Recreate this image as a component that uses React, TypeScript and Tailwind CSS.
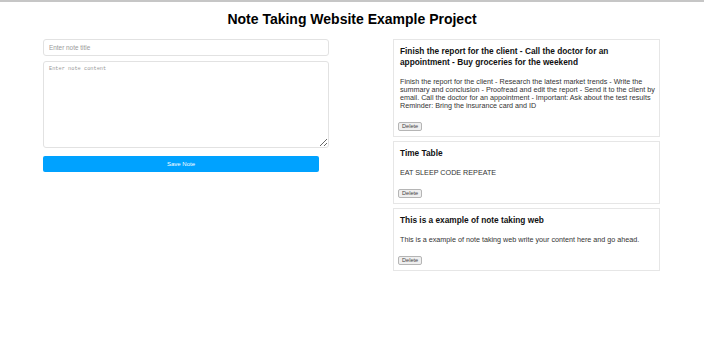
import React, { useState } from 'react';

type Note = { id: number; title: string; content: string };

const initialNotes: Note[] = [
    {
        id: 1,
        title: 'Finish the report for the client - Call the doctor for an appointment - Buy groceries for the weekend',
        content:
            'Finish the report for the client - Research the latest market trends - Write the summary and conclusion - Proofread and edit the report - Send it to the client by email. Call the doctor for an appointment - Important: Ask about the test results Reminder: Bring the insurance card and ID',
    },
    { id: 2, title: 'Time Table', content: 'EAT SLEEP CODE REPEATE' },
    {
        id: 3,
        title: 'This is a example of note taking web',
        content: 'This is a example of note taking web write your content here and go ahead.',
    },
];

const App = () => {
    const [notes, setNotes] = useState<Note[]>(initialNotes);
    const [title, setTitle] = useState('');
    const [content, setContent] = useState('');

    const saveNote = () => {
        if (!title.trim() && !content.trim()) return;
        setNotes([{ id: Date.now(), title, content }, ...notes]);
        setTitle('');
        setContent('');
    };

    return (
        <div className="min-h-[348px] w-[704px] bg-white border-t-2 border-[#c6c6c6] font-['Liberation_Sans',Arial,sans-serif]">
            <h1 className="pt-[9px] text-center text-[14px] leading-[16px] font-bold text-black">
                Note Taking Website Example Project
            </h1>

            <div className="flex items-start gap-[64px] pl-[43px] pt-[12px]">
                {/* Form */}
                <div className="flex w-[286px] flex-col">
                    <input
                        className="h-[17px] w-full rounded-[3px] border border-[#e2e2e2] px-[5px] text-[6.4px] text-[#333] outline-none placeholder:text-[#9a9a9a]"
                        placeholder="Enter note title"
                        value={title}
                        onChange={(e) => setTitle(e.target.value)}
                    />
                    <textarea
                        className="mt-[5px] h-[87px] w-full rounded-[3px] border border-[#e2e2e2] px-[5px] py-[4px] font-['Liberation_Mono',monospace] text-[5.3px] leading-[7px] text-[#333] outline-none placeholder:text-[#9a9a9a]"
                        placeholder="Enter note content"
                        value={content}
                        onChange={(e) => setContent(e.target.value)}
                    />
                    <button
                        className="mt-[8px] h-[16px] w-[276px] rounded-[2px] bg-[#00a2ff] text-[6px] text-white"
                        onClick={saveNote}
                    >
                        Save Note
                    </button>
                </div>

                {/* Notes */}
                <div className="flex w-[267px] flex-col gap-[4px]">
                    {notes.map((note) => (
                        <div key={note.id} className="border border-[#e6e6e6] pl-[6px] pr-[4px] pt-[6px] pb-[5px]">
                            <h3 className="text-[8.3px] leading-[11px] font-bold text-[#111]">{note.title}</h3>
                            <p className="mt-[10px] text-[7.2px] leading-[8px] text-[#333]">{note.content}</p>
                            <button
                                className="mt-[12px] -ml-[2px] block h-[9px] rounded-[2px] border border-[#b5b5b5] bg-[#efefef] px-[3px] text-[5.6px] leading-[7px] text-[#444]"
                                onClick={() => setNotes(notes.filter((n) => n.id !== note.id))}
                            >
                                Delete
                            </button>
                        </div>
                    ))}
                </div>
            </div>
        </div>
    );
};

export default App;
